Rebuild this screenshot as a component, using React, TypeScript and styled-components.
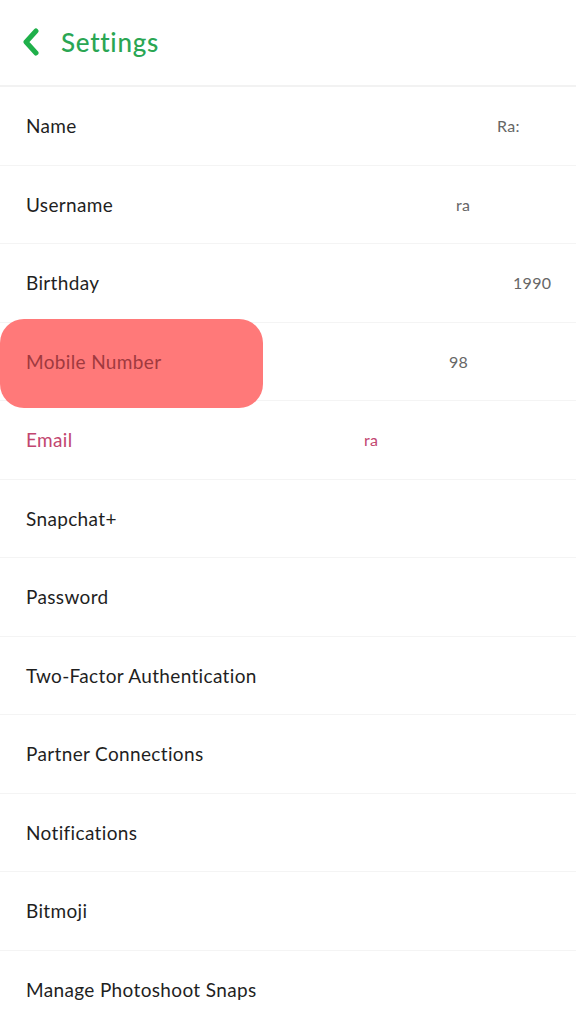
import React from 'react';
import styled, { createGlobalStyle } from 'styled-components';

const GlobalStyle = createGlobalStyle`
	html, body {
		margin: 0;
		padding: 0;
		background: #ffffff;
	}
	body {
		font-family: Lato, 'Open Sans', sans-serif;
	}
`;

const Page = styled.div`
	width: 576px;
	min-height: 1024px;
	background: #ffffff;
	overflow: hidden;
`;

const Header = styled.header`
	box-sizing: border-box;
	height: 87px;
	display: flex;
	align-items: center;
	gap: 20px;
	padding: 0 0 1px 21px;
	border-bottom: 2px solid #f2f2f2;
`;

const BackButton = styled.button`
	display: flex;
	align-items: center;
	justify-content: center;
	width: 20px;
	height: 30px;
	padding: 0;
	border: none;
	background: none;
`;

const Title = styled.h1`
	margin: 0;
	font-size: 26px;
	font-weight: 500;
	color: #2aa653;
	letter-spacing: 0.7px;
`;

const List = styled.ul`
	margin: 0;
	padding: 0;
	list-style: none;
`;

const Row = styled.li`
	position: relative;
	box-sizing: border-box;
	height: 78.5px;
	display: flex;
	align-items: center;
	padding: 0 26px;
	border-bottom: 1.5px solid #f4f4f4;
`;

const Label = styled.span<{ $tone?: 'alert' | 'focus' }>`
	position: relative;
	z-index: 1;
	font-size: 19px;
	color: ${({ $tone }) =>
		$tone === 'alert' ? '#c2466f' : $tone === 'focus' ? '#a0393f' : '#1f1f1f'};
	letter-spacing: 0.35px;
`;

const Value = styled.span<{ $at: number; $tone?: 'alert' }>`
	position: absolute;
	left: ${({ $at }) => $at}px;
	font-size: 16px;
	letter-spacing: 0.3px;
	color: ${({ $tone }) => ($tone === 'alert' ? '#c2466f' : '#666666')};
`;

// red marker drawn over the selected row
const Highlight = styled.div`
	position: absolute;
	left: 0;
	top: -4px;
	width: 263px;
	height: 89px;
	border-radius: 24px;
	background: #ff7979;
`;

type Item = {
	label: string;
	value?: string;
	valueAt?: number;
	tone?: 'alert' | 'focus';
};

const items: Item[] = [
	{ label: 'Name', value: 'Ra:', valueAt: 497 },
	{ label: 'Username', value: 'ra', valueAt: 456 },
	{ label: 'Birthday', value: '1990', valueAt: 513 },
	{ label: 'Mobile Number', value: '98', valueAt: 449, tone: 'focus' },
	{ label: 'Email', value: 'ra', valueAt: 364, tone: 'alert' },
	{ label: 'Snapchat+' },
	{ label: 'Password' },
	{ label: 'Two-Factor Authentication' },
	{ label: 'Partner Connections' },
	{ label: 'Notifications' },
	{ label: 'Bitmoji' },
	{ label: 'Manage Photoshoot Snaps' },
];

export default function App() {
	return (
		<Page>
			<GlobalStyle />
			<Header>
				<BackButton aria-label='Back'>
					<svg width='18' height='28' viewBox='0 0 18 28'>
						<path
							d='M14 3 L4 14 L14 25'
							fill='none'
							stroke='#1fb04a'
							strokeWidth='5'
							strokeLinecap='round'
							strokeLinejoin='round'
						/>
					</svg>
				</BackButton>
				<Title>Settings</Title>
			</Header>
			<List>
				{items.map((item) => (
					<Row key={item.label}>
						{item.tone === 'focus' && <Highlight />}
						<Label $tone={item.tone}>{item.label}</Label>
						{item.value && (
							<Value $at={item.valueAt ?? 0} $tone={item.tone === 'alert' ? 'alert' : undefined}>
								{item.value}
							</Value>
						)}
					</Row>
				))}
			</List>
		</Page>
	);
}
